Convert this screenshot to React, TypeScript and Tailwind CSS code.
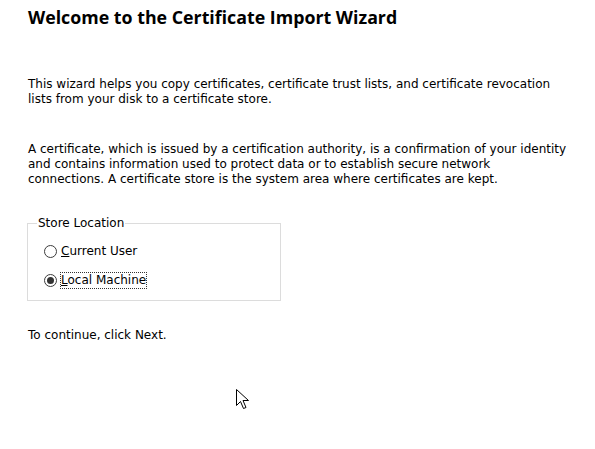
import React from "react";

const body = { fontFamily: '"DejaVu Sans", Verdana, sans-serif' };

export default function App() {
  return (
    <div className="w-[595px] h-[449px] bg-white text-black relative overflow-hidden" style={body}>
      <div className="pl-[28px] pt-[6px]">
        <h1 className="text-[17.8px] leading-[22px] font-bold" style={{ fontFamily: '"Open Sans", sans-serif' }}>
          Welcome to the Certificate Import Wizard
        </h1>
        <div className="mt-[49px] text-[12px] leading-[15px] w-[560px]">
          <p>
            This wizard helps you copy certificates, certificate trust lists, and certificate revocation
            <br />
            lists from your disk to a certificate store.
          </p>
          <p className="mt-[35px]">
            A certificate, which is issued by a certification authority, is a confirmation of your identity
            <br />
            and contains information used to protect data or to establish secure network
            <br />
            connections. A certificate store is the system area where certificates are kept.
          </p>
          <fieldset className="mt-[29px] w-[254px] h-[85px] border border-[#dcdcdc] pl-[16px] pr-2 pb-2 m-0 -ml-[1px]">
            <legend className="px-[1px] ml-[-7px] text-[12px] leading-[15px]">Store Location</legend>
            <div className="flex items-center gap-[4px] mt-[12px] h-[16px]">
              <span className="w-[13px] h-[13px] rounded-full border border-[#3c3c3c] bg-white" />
              <span>
                <span className="underline">C</span>urrent User
              </span>
            </div>
            <div className="flex items-center gap-[3px] mt-[12px] h-[18px]">
              <span className="w-[13px] h-[13px] rounded-full border border-[#3c3c3c] bg-white flex items-center justify-center">
                <span className="w-[7px] h-[7px] rounded-full bg-[#333]" />
              </span>
              <span className="border border-dotted border-[#333] leading-[15px]">
                <span className="underline">L</span>ocal Machine
              </span>
            </div>
          </fieldset>
          <p className="mt-[27px]">To continue, click Next.</p>
        </div>
      </div>
      <svg className="absolute left-[236px] top-[389px]" width="13" height="20" viewBox="0 0 13 20">
        <path d="M0.5 0.5 L0.5 16.5 L4.5 12.5 L7.5 19.5 L10 18.5 L7 11.5 L12.5 11.5 Z" fill="white" stroke="black" strokeWidth="1" />
      </svg>
    </div>
  );
}
